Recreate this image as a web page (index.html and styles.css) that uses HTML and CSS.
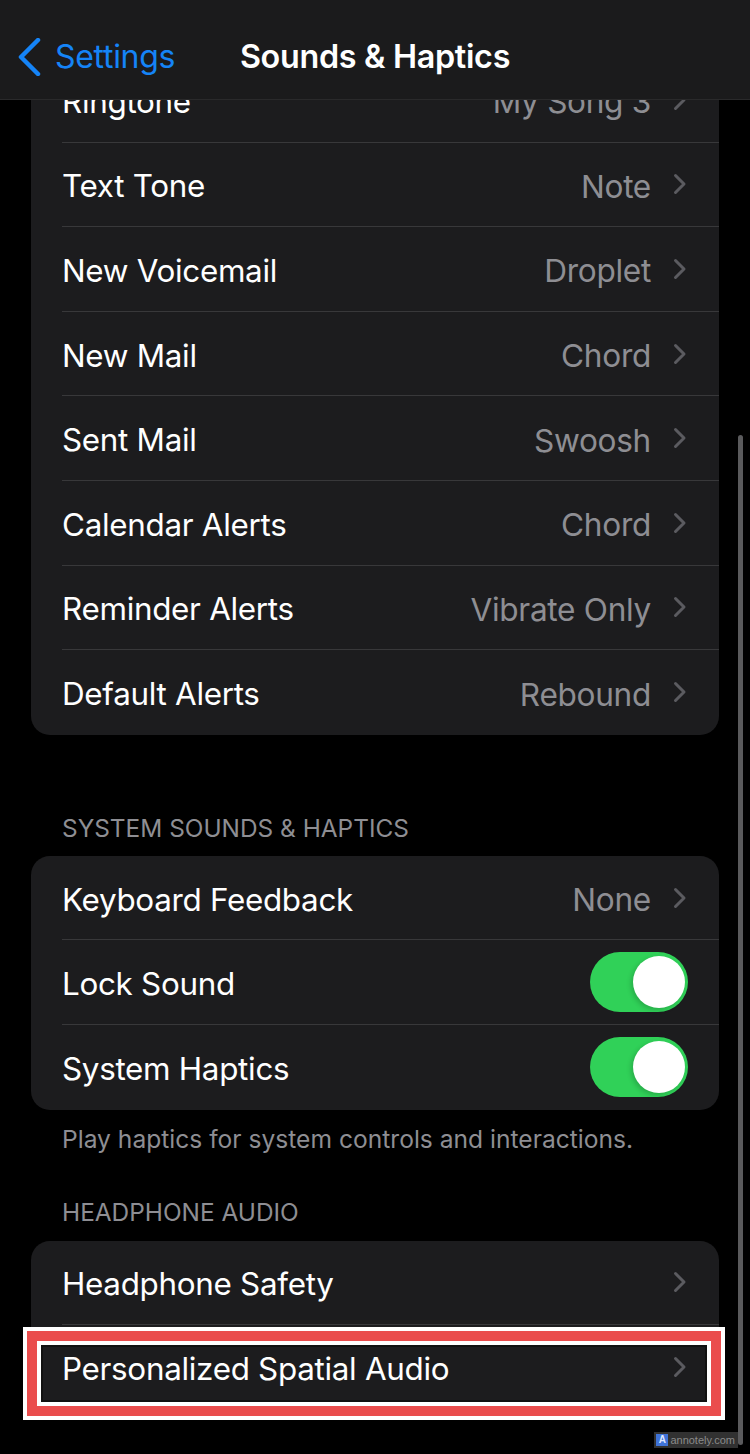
FILE: index.html
```html
<!DOCTYPE html>
<html lang="en">
<head>
  <meta charset="UTF-8" />
  <meta name="viewport" content="width=device-width, initial-scale=1.0"/>
  <title>Sounds &amp; Haptics</title>
  <link rel="stylesheet" href="styles.css">
</head>
<body>
  <div class="screen">
    <header class="navbar">
      <a class="back" href="#">
        <svg class="back-icon" width="24" height="38" viewBox="0 0 24 38">
          <path d="M21 2 L4 19 L21 36" fill="none" stroke="#1584f7" stroke-width="4.5" stroke-linecap="round" stroke-linejoin="round"/>
        </svg>
        <span>Settings</span>
      </a>
      <h1 class="nav-title">Sounds &amp; Haptics</h1>
    </header>

    <main class="content">
      <section class="group">
        <div class="row"><div class="row-body"><span class="label">Ringtone</span><span class="value">My Song 3</span><svg class="chevron" viewBox="0 0 14 22"><path d="M2.5 2.5 L11 11 L2.5 19.5"/></svg></div></div>
        <div class="row"><div class="row-body"><span class="label">Text Tone</span><span class="value">Note</span><svg class="chevron" viewBox="0 0 14 22"><path d="M2.5 2.5 L11 11 L2.5 19.5"/></svg></div></div>
        <div class="row"><div class="row-body"><span class="label">New Voicemail</span><span class="value">Droplet</span><svg class="chevron" viewBox="0 0 14 22"><path d="M2.5 2.5 L11 11 L2.5 19.5"/></svg></div></div>
        <div class="row"><div class="row-body"><span class="label">New Mail</span><span class="value">Chord</span><svg class="chevron" viewBox="0 0 14 22"><path d="M2.5 2.5 L11 11 L2.5 19.5"/></svg></div></div>
        <div class="row"><div class="row-body"><span class="label">Sent Mail</span><span class="value">Swoosh</span><svg class="chevron" viewBox="0 0 14 22"><path d="M2.5 2.5 L11 11 L2.5 19.5"/></svg></div></div>
        <div class="row"><div class="row-body"><span class="label">Calendar Alerts</span><span class="value">Chord</span><svg class="chevron" viewBox="0 0 14 22"><path d="M2.5 2.5 L11 11 L2.5 19.5"/></svg></div></div>
        <div class="row"><div class="row-body"><span class="label">Reminder Alerts</span><span class="value">Vibrate Only</span><svg class="chevron" viewBox="0 0 14 22"><path d="M2.5 2.5 L11 11 L2.5 19.5"/></svg></div></div>
        <div class="row"><div class="row-body"><span class="label">Default Alerts</span><span class="value">Rebound</span><svg class="chevron" viewBox="0 0 14 22"><path d="M2.5 2.5 L11 11 L2.5 19.5"/></svg></div></div>
      </section>

      <h2 class="section-header first">SYSTEM SOUNDS &amp; HAPTICS</h2>
      <section class="group">
        <div class="row"><div class="row-body"><span class="label">Keyboard Feedback</span><span class="value">None</span><svg class="chevron" viewBox="0 0 14 22"><path d="M2.5 2.5 L11 11 L2.5 19.5"/></svg></div></div>
        <div class="row"><div class="row-body toggle-row"><span class="label">Lock Sound</span><span class="toggle on"></span></div></div>
        <div class="row"><div class="row-body toggle-row"><span class="label">System Haptics</span><span class="toggle on"></span></div></div>
      </section>
      <p class="section-footer">Play haptics for system controls and interactions.</p>

      <h2 class="section-header">HEADPHONE AUDIO</h2>
      <section class="group">
        <div class="row"><div class="row-body"><span class="label">Headphone Safety</span><svg class="chevron solo" viewBox="0 0 14 22"><path d="M2.5 2.5 L11 11 L2.5 19.5"/></svg></div></div>
        <div class="row"><div class="row-body"><span class="label">Personalized Spatial Audio</span><svg class="chevron solo" viewBox="0 0 14 22"><path d="M2.5 2.5 L11 11 L2.5 19.5"/></svg></div></div>
      </section>
    </main>

    <div class="scrollbar"></div>

    <!-- highlight drawn over the last row -->
    <div class="annotation"><div class="annotation-inner"></div></div>

    <div class="watermark"><span class="wm-logo">A</span>annotely.com</div>
  </div>
</body>
</html>
```

FILE: styles.css
```css
body {
  margin: 0;
  background: #000;
  font-family: Inter, "Noto Sans", "Liberation Sans", sans-serif;
  color: #fff;
}

.screen {
  position: relative;
  width: 750px;
  height: 1454px;
  overflow: hidden;
  background: #000;
}

/* top bar sits over the scrolled list */
.navbar {
  position: absolute;
  top: 0;
  left: 0;
  right: 0;
  height: 99px;
  z-index: 2;
  display: grid;
  grid-template-columns: 1fr auto 1fr;
  align-items: center;
  background: #1b1b1c;
  border-bottom: 1px solid #2a2a2b;
}

.back {
  display: flex;
  align-items: center;
  gap: 14px;
  padding-left: 17px;
  color: #1584f7;
  text-decoration: none;
  font-size: 32px;
  letter-spacing: -0.3px;
  margin-top: 14px;
}

.back-icon {
  display: block;
}

.nav-title {
  margin: 14px 0 0;
  font-size: 32.3px;
  font-weight: 600;
  letter-spacing: -0.3px;
}

.content {
  padding-top: 58px;
}

.group {
  margin: 0 31px;
  background: #1c1c1e;
  border-radius: 19px;
  overflow: hidden;
}

.row {
  height: 84.6px;
  padding-left: 31px;
}

.row-body {
  height: 100%;
  box-sizing: border-box;
  display: flex;
  align-items: center;
  padding-top: 4px;
  padding-right: 32px;
  border-bottom: 1px solid #38383a;
}

.row:last-child .row-body {
  border-bottom: none;
}

.label {
  font-size: 31.4px;
  letter-spacing: -0.3px;
}

.value {
  margin-left: auto;
  font-size: 31.6px;
  letter-spacing: -0.3px;
  color: #8e8e93;
}

.chevron {
  width: 14px;
  height: 22px;
  margin-left: 22px;
  margin-top: -4px;
  fill: none;
  stroke: #5b5b60;
  stroke-width: 3;
  stroke-linecap: round;
  stroke-linejoin: round;
}

.chevron.solo {
  margin-left: auto;
}

.toggle-row {
  padding-right: 31px;
}

.toggle {
  margin-left: auto;
  margin-top: -4px;
  width: 98px;
  height: 60px;
  box-sizing: border-box;
  border-radius: 30px;
  background: #30d158;
  display: flex;
  align-items: center;
  justify-content: flex-end;
  padding-right: 3px;
}

.toggle::after {
  content: "";
  width: 52px;
  height: 52px;
  border-radius: 50%;
  background: #fff;
  box-shadow: -2px 2px 5px rgba(0, 0, 0, 0.18);
}

.section-header {
  margin: 0;
  padding: 15px 0 14px 62px;
  font-size: 24.4px;
  line-height: 30px;
  font-weight: 400;
  color: #8e8e93;
}

.section-header.first {
  padding-top: 78px;
  padding-bottom: 13px;
}

.section-footer {
  margin: 0;
  padding: 14px 0 28px 62px;
  font-size: 24.6px;
  line-height: 30px;
  color: #8e8e93;
}

.scrollbar {
  position: absolute;
  left: 738px;
  top: 435px;
  width: 5px;
  height: 1010px;
  border-radius: 3px;
  background: #5a5a5c;
}

.annotation {
  position: absolute;
  left: 23px;
  top: 1327px;
  width: 702px;
  height: 93px;
  box-sizing: border-box;
  border: 4px solid #fff;
}

.annotation-inner {
  height: 100%;
  box-sizing: border-box;
  border: 10px solid #ea4d4d;
  box-shadow: inset 0 0 0 4px #fff, inset 0 0 0 6px #111;
}

.watermark {
  position: absolute;
  right: 12px;
  bottom: 6px;
  height: 16px;
  display: flex;
  align-items: center;
  gap: 2px;
  padding: 0 3px 0 2px;
  background: rgba(90, 90, 90, 0.55);
  color: #8a8a8a;
  font-size: 11px;
  font-family: "Liberation Sans", sans-serif;
}

.wm-logo {
  width: 12px;
  height: 12px;
  background: #3f73d8;
  color: #dfe8ff;
  font-size: 10px;
  font-weight: 700;
  line-height: 12px;
  text-align: center;
}
```
